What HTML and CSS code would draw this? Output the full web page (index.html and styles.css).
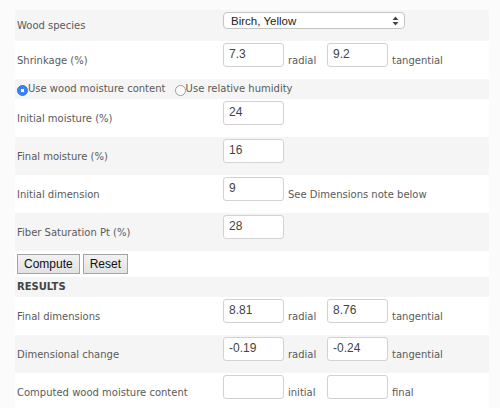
FILE: index.html
```html
<!DOCTYPE html>
<html lang="en">
<head>
    <meta charset="UTF-8">
    <meta name="viewport" content="width=device-width, initial-scale=1.0">
    <title>Wood Shrinkage Calculator</title>
    <link rel="stylesheet" href="styles.css">
</head>
<body>
    <form class="calc" onsubmit="return false">
        <table class="calc-table">
            <colgroup>
                <col class="col-label">
                <col class="col-input">
                <col class="col-unit">
                <col class="col-input">
                <col class="col-unit2">
            </colgroup>
            <tr>
                <td class="label">Wood species</td>
                <td colspan="4">
                    <div class="select-wrap">
                        <select class="species">
                            <option>Birch, Yellow</option>
                        </select>
                        <!-- mac style up/down arrows -->
                        <svg class="select-arrows" width="7" height="10" viewBox="0 0 7 10">
                            <path d="M3.5 0.5 L6.5 4 L0.5 4 Z" fill="#444"/>
                            <path d="M3.5 9.5 L6.5 6 L0.5 6 Z" fill="#444"/>
                        </svg>
                    </div>
                </td>
            </tr>
            <tr>
                <td class="label">Shrinkage (%)</td>
                <td><input type="text" class="num" value="7.3"></td>
                <td class="unit">radial</td>
                <td><input type="text" class="num" value="9.2"></td>
                <td class="unit">tangential</td>
            </tr>
            <tr>
                <td colspan="5" class="choice">
                    <label><input type="radio" name="mode" class="radio" checked>Use wood moisture content</label>
                    <label class="second"><input type="radio" name="mode" class="radio">Use relative humidity</label>
                </td>
            </tr>
            <tr>
                <td class="label">Initial moisture (%)</td>
                <td><input type="text" class="num" value="24"></td>
                <td colspan="3"></td>
            </tr>
            <tr>
                <td class="label">Final moisture (%)</td>
                <td><input type="text" class="num" value="16"></td>
                <td colspan="3"></td>
            </tr>
            <tr>
                <td class="label">Initial dimension</td>
                <td><input type="text" class="num" value="9"></td>
                <td colspan="3" class="unit note">See Dimensions note below</td>
            </tr>
            <tr>
                <td class="label">Fiber Saturation Pt (%)</td>
                <td><input type="text" class="num" value="28"></td>
                <td colspan="3"></td>
            </tr>
            <tr>
                <td colspan="5">
                    <div class="buttons">
                        <button class="btn" onclick="compute()">Compute</button>
                        <button class="btn" type="reset">Reset</button>
                    </div>
                </td>
            </tr>
            <tr>
                <td colspan="5" class="heading">RESULTS</td>
            </tr>
            <tr>
                <td class="label">Final dimensions</td>
                <td><input type="text" class="num" id="finalR" value="8.81"></td>
                <td class="unit">radial</td>
                <td><input type="text" class="num" id="finalT" value="8.76"></td>
                <td class="unit">tangential</td>
            </tr>
            <tr>
                <td class="label">Dimensional change</td>
                <td><input type="text" class="num" id="changeR" value="-0.19"></td>
                <td class="unit">radial</td>
                <td><input type="text" class="num" id="changeT" value="-0.24"></td>
                <td class="unit">tangential</td>
            </tr>
            <tr>
                <td class="label">Computed wood moisture content</td>
                <td><input type="text" class="num"></td>
                <td class="unit">initial</td>
                <td><input type="text" class="num"></td>
                <td class="unit">final</td>
            </tr>
        </table>
    </form>

    <script>
        function compute() {
            // not wired up in this copy
        }
    </script>
</body>
</html>
```

FILE: styles.css
```css
body {
    margin: 0;
    padding: 10px 0 0 15px;
    background-color: #fbfbfb;
    font-family: "DejaVu Sans", Verdana, sans-serif;
    font-size: 10px;
    color: #5a5a5a;
}
.calc-table {
    width: 474px;
    table-layout: fixed;
    border-collapse: collapse;
}
.col-label { width: 206px; }
.col-input { width: 65px; }
.col-unit { width: 39px; }
.col-unit2 { width: 99px; }

.calc-table td {
    padding: 2px;
    vertical-align: middle;
    white-space: nowrap;
}
.calc-table tr:nth-child(odd) {
    background-color: #f5f5f5;
}
.calc-table tr:nth-child(even) {
    background-color: #fff;
}
.label, .unit {
    color: #5a5a5a;
}
.num {
    display: block;
    box-sizing: border-box;
    width: 61px;
    height: 24px;
    margin: 0 0 10px 0;
    padding: 0 5px 2px;
    border: 1px solid #d2d2d2;
    border-radius: 3px;
    background: #fff;
    font-family: "Liberation Sans", Arial, sans-serif;
    font-size: 12px;
    color: #444;
}
.select-wrap {
    position: relative;
    width: 182px;
    margin-bottom: 10px;
}
.species {
    display: block;
    box-sizing: border-box;
    width: 182px;
    height: 17px;
    padding: 0 7px;
    border: 1px solid #c4c4c4;
    border-radius: 4px;
    background: #fff;
    -webkit-appearance: none;
    appearance: none;
    font-family: "Liberation Sans", Arial, sans-serif;
    font-size: 11.5px;
    color: #222;
}
.select-arrows {
    position: absolute;
    right: 6px;
    top: 4px;
}
.choice {
    line-height: 16px;
}
.choice .second {
    margin-left: 6px;
}
.radio {
    -webkit-appearance: none;
    appearance: none;
    box-sizing: border-box;
    width: 11px;
    height: 11px;
    margin: 0;
    border: 1px solid #9a9a9a;
    border-radius: 50%;
    background: #fff;
    vertical-align: -4px;
}
.radio:checked {
    border-color: #2f74f0;
    background: radial-gradient(circle, #fff 0 1.5px, #3b82f6 2px);
}
.buttons {
    display: flex;
    gap: 3px;
    margin: 1px 0;
}
.btn {
    height: 20px;
    padding: 0 6px;
    border: 1px solid #a3a3a3;
    border-radius: 0;
    background: linear-gradient(#f2f2f2, #e2e2e2);
    font-family: "Liberation Sans", Arial, sans-serif;
    font-size: 12px;
    color: #111;
}
.heading {
    line-height: 16px;
    font-weight: bold;
    color: #444;
}
```
